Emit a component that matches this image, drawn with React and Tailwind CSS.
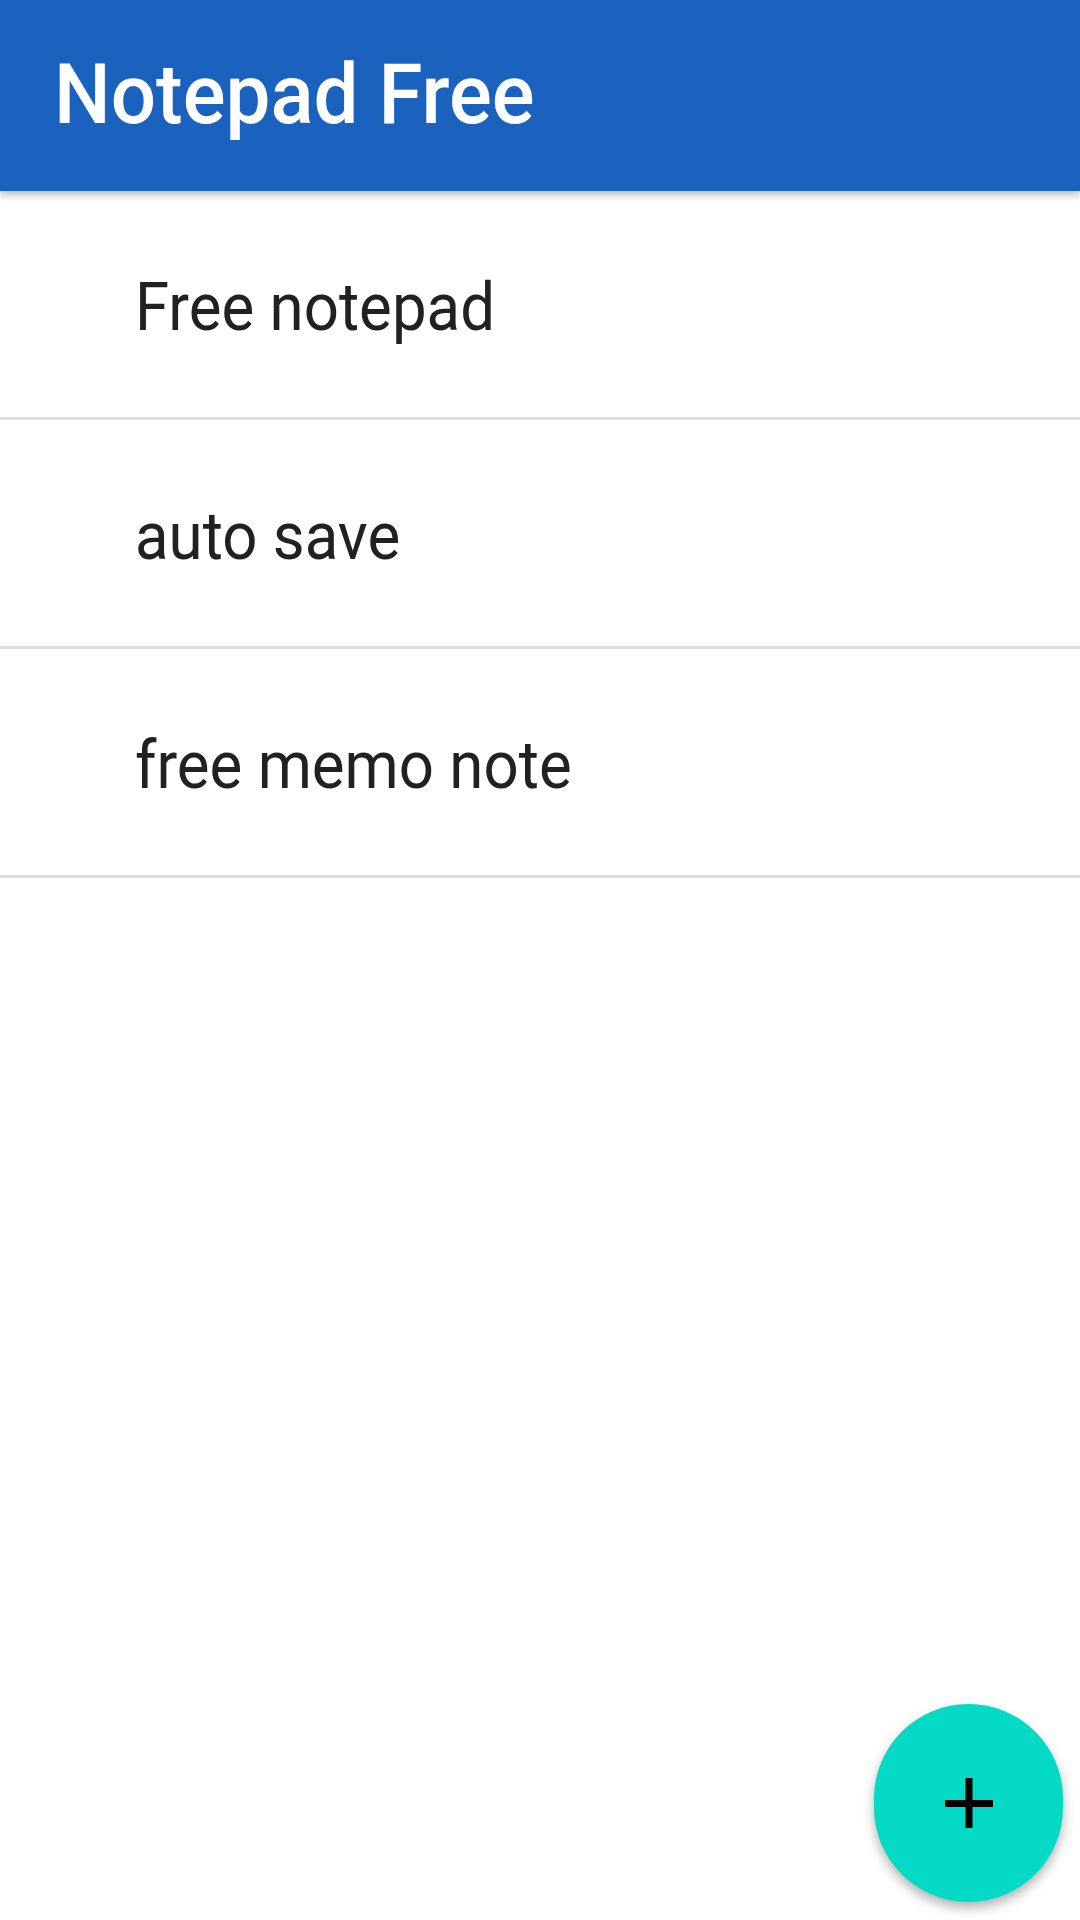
import React from "react";

const notes = ["Free notepad", "auto save", "free memo note"];

function App() {
  return (
    <div
      className="relative w-[1080px] h-[1920px] bg-white overflow-hidden"
      style={{ fontFamily: "Roboto, 'Noto Sans', sans-serif" }}
    >
      <div className="relative z-10 h-[191px] bg-[#1a62bd] flex items-center pl-[54px] shadow-[0_4px_8px_rgba(0,0,0,0.28)]">
        <span className="text-white text-[83px] font-medium inline-block origin-left scale-x-[0.963]">
          Notepad Free
        </span>
      </div>
      <div className="flex flex-col">
        {notes.map((note) => (
          <div
            key={note}
            className="h-[229px] flex items-center pl-[135px] pt-[6px] border-b-[3px] border-[#dedede]"
          >
            <span className="text-[66px] text-[#212121] inline-block origin-left scale-x-[0.936]">
              {note}
            </span>
          </div>
        ))}
      </div>
      <button className="absolute right-[17px] bottom-[18px] w-[189px] h-[198px] rounded-full bg-[#03d9c5] flex items-center justify-center shadow-[0_6px_12px_rgba(0,0,0,0.3)]">
        <svg width="48" height="50" viewBox="0 0 48 50">
          <rect x="0" y="22" width="48" height="7" fill="#000" />
          <rect x="20.5" y="0" width="7" height="50" fill="#000" />
        </svg>
      </button>
    </div>
  );
}

export default App;
